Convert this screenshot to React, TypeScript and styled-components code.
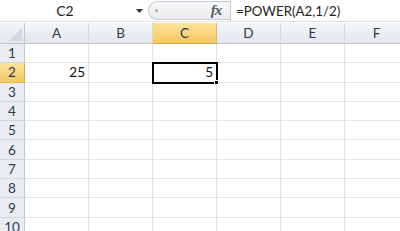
import styled, { createGlobalStyle } from "styled-components";

const GlobalStyle = createGlobalStyle`
  body {
    margin: 0;
    background: #fff;
    font-family: Lato, "Liberation Sans", Arial, sans-serif;
  }
`;

const COLS = ["A", "B", "C", "D", "E", "F"];
const ROWS = [1, 2, 3, 4, 5, 6, 7, 8, 9, 10];
const data: Record<string, string> = { A2: "25", C2: "5" };
const activeCol = "C";
const activeRow = 2;

type ActiveProps = {
  $active: boolean;
};

const Sheet = styled.div`
  width: 400px;
  height: 231px;
  overflow: hidden;
  background: #fff;
`;

const FormulaBar = styled.div`
  height: 21px;
  display: flex;
  align-items: stretch;
  background: #fff;
  border-bottom: 1px solid #dfe3e8;
`;

const NameBox = styled.div`
  width: 130px;
  display: flex;
  align-items: center;
  justify-content: center;
  font-size: 14px;
  color: #1e1e1e;
`;

const DropArrow = styled.div`
  width: 18px;
  display: flex;
  align-items: center;
  justify-content: center;
`;

const Gadget = styled.div`
  margin: 1px 0;
  width: 81px;
  display: flex;
  align-items: stretch;
  border: 1px solid #c6cad1;
  border-right: none;
  border-radius: 10px 0 0 10px;
  background: linear-gradient(#f7f8f9, #e9ebee);
`;

const GadgetDot = styled.div`
  flex: 1;
  display: flex;
  align-items: center;
  padding-left: 6px;

  &::before {
    content: "";
    width: 3px;
    height: 3px;
    border-radius: 50%;
    background: #a8adb5;
  }
`;

const FxButton = styled.div`
  width: 28px;
  display: flex;
  align-items: center;
  justify-content: center;
  font-family: "Liberation Serif", "Times New Roman", serif;
  font-style: italic;
  font-weight: bold;
  font-size: 15px;
  color: #555a62;
  letter-spacing: -1px;
`;

const FormulaInput = styled.div`
  flex: 1;
  display: flex;
  align-items: center;
  padding-left: 5px;
  border-left: 1px solid #c6cad1;
  font-size: 13.3px;
  color: #1e1e1e;
  white-space: nowrap;
`;

const Grid = styled.div`
  margin-top: 1px;
  display: grid;
  grid-template-columns: 25px repeat(6, 64px);
  grid-template-rows: 21px repeat(10, 19.3px);
`;

const Corner = styled.div`
  background: linear-gradient(#f1f3f6, #e2e6eb);
  border-right: 1px solid #c2c7ce;
  border-bottom: 1px solid #c2c7ce;
  position: relative;

  &::after {
    content: "";
    position: absolute;
    right: 2px;
    bottom: 2px;
    border-style: solid;
    border-width: 0 0 13px 13px;
    border-color: transparent transparent #d3d8de transparent;
  }
`;

const ColHead = styled.div<ActiveProps>`
  display: flex;
  align-items: center;
  justify-content: center;
  font-size: 13.5px;
  color: #2e3a4c;
  background: ${(p) =>
    p.$active
      ? "linear-gradient(#fbe29c, #f5c862)"
      : "linear-gradient(#f4f6f8, #e3e7ec)"};
  border-right: 1px solid ${(p) => (p.$active ? "#e8b84c" : "#d3d8de")};
  border-bottom: 1px solid ${(p) => (p.$active ? "#e3a93a" : "#c2c7ce")};
`;

const RowHead = styled.div<ActiveProps>`
  display: flex;
  align-items: center;
  justify-content: center;
  font-size: 13.5px;
  color: #2e3a4c;
  background: ${(p) =>
    p.$active ? "linear-gradient(#fbe29c, #f5c862)" : "#e9edf2"};
  border-right: 1px solid ${(p) => (p.$active ? "#e3a93a" : "#c2c7ce")};
  border-bottom: 1px solid ${(p) => (p.$active ? "#e8b84c" : "#d3d8de")};
`;

const Cell = styled.div<ActiveProps>`
  position: relative;
  display: flex;
  align-items: center;
  justify-content: flex-end;
  padding-right: 3px;
  font-size: 13.5px;
  color: #111;
  background: #fff;
  border-right: 1px solid #e1e3e6;
  border-bottom: 1px solid #e1e3e6;
  outline: ${(p) => (p.$active ? "2px solid #000" : "none")};
  outline-offset: -1px;
  z-index: ${(p) => (p.$active ? 2 : 0)};
`;

const FillHandle = styled.div`
  position: absolute;
  right: -3px;
  bottom: -3px;
  width: 5px;
  height: 5px;
  background: #000;
  border: 1px solid #fff;
  box-sizing: border-box;
`;

export default function App() {
  return (
    <Sheet>
      <GlobalStyle />
      <FormulaBar>
        <NameBox>C2</NameBox>
        <DropArrow>
          <svg width="7" height="4" viewBox="0 0 7 4">
            <path d="M0 0 H7 L3.5 4 Z" fill="#333" />
          </svg>
        </DropArrow>
        <Gadget>
          <GadgetDot />
          <FxButton>fx</FxButton>
        </Gadget>
        <FormulaInput>=POWER(A2,1/2)</FormulaInput>
      </FormulaBar>
      <Grid>
        <Corner />
        {COLS.map((c) => (
          <ColHead key={c} $active={c === activeCol}>
            {c}
          </ColHead>
        ))}
        {ROWS.map((r) => [
          <RowHead key={"h" + r} $active={r === activeRow}>
            {r}
          </RowHead>,
          ...COLS.map((c) => {
            const id = c + r;
            const active = c === activeCol && r === activeRow;
            return (
              <Cell key={id} $active={active}>
                {data[id]}
                {active && <FillHandle />}
              </Cell>
            );
          }),
        ])}
      </Grid>
    </Sheet>
  );
}
